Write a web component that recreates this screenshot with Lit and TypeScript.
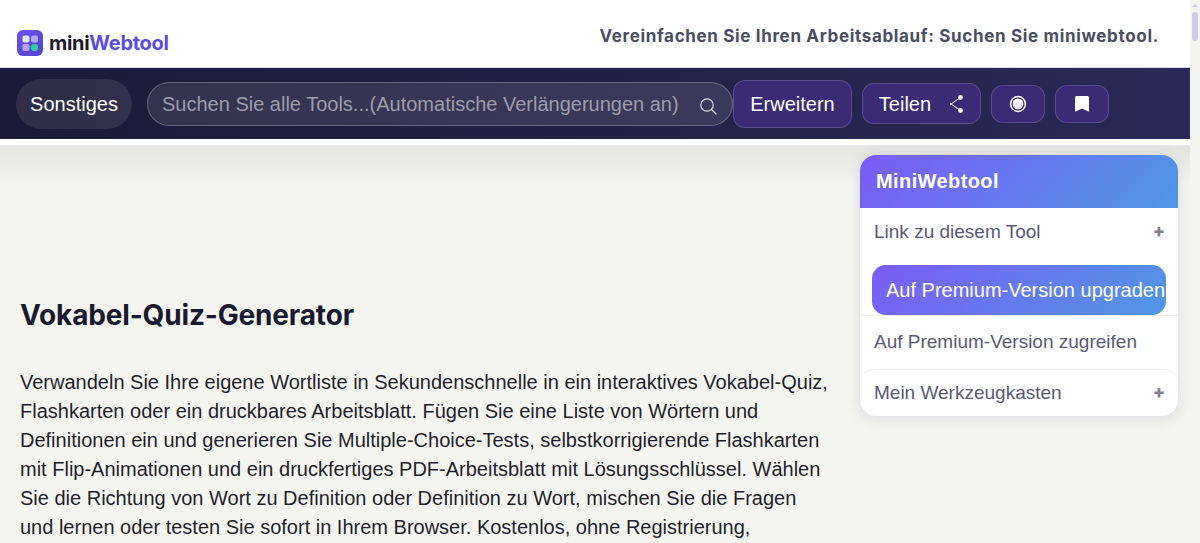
import { LitElement, html, css } from "lit";
import { customElement } from "lit/decorators.js";

@customElement("app-root")
export class AppRoot extends LitElement {
  static styles = css`
    :host { display: block; height: 543px; overflow: hidden; font-family: "Liberation Sans", Arial, sans-serif; }
    * { box-sizing: border-box; }
    .page { display: flex; height: 543px; background: #f4f5f0; }
    .main { width: 1190px; flex: none; display: flex; flex-direction: column; }
    .scrollbar { width: 10px; flex: none; background: #f4f5f0; display: flex; flex-direction: column; align-items: center; }
    .arrow { width: 0; height: 0; margin-top: 4px; border-left: 3px solid transparent; border-right: 3px solid transparent; border-bottom: 3px solid #c9c6df; }
    .thumb { width: 6px; height: 29px; margin-top: 5px; border-radius: 3px; background: #cfcde4; }
    .top { height: 67px; flex: none; background: #fff; display: flex; justify-content: space-between; padding: 0 31px 0 17px; }
    .logo { display: flex; align-items: center; gap: 6px; padding-top: 29px; height: 56px; }
    .logo svg { display: block; flex: none; }
    .logo-text { font: 700 20px/26px Inter, sans-serif; letter-spacing: -0.3px; color: #1a1a2e; margin-top: 1px; }
    .logo-text b { font-weight: 700; color: #5b4ae6; }
    .tagline { font: 700 17px/22px Inter, sans-serif; color: #4a4e60; padding-top: 25px; letter-spacing: 0.66px; white-space: nowrap; }
    .nav { height: 72px; flex: none; background: linear-gradient(90deg, #1c1a38, #2c2855); border-top: 1px solid #d9d8e8; display: flex; align-items: center; padding: 0 0 0 16px; }
    .cat { height: 50px; width: 116px; flex: none; border-radius: 25px; background: rgba(255,255,255,.09); color: #fff; font-size: 20px; display: flex; align-items: center; justify-content: center; margin-right: 15px; padding-top: 2px; }
    .search { width: 586px; height: 44px; flex: none; border-radius: 22px; background: rgba(255,255,255,.1); border: 1px solid rgba(255,255,255,.25); display: flex; align-items: center; justify-content: space-between; padding: 2px 14px 0 14px; color: #9d9cab; font-size: 20px; }
    .search svg { margin-top: 3px; }
    .btn { flex: none; background: #3a2b74; border: 1px solid rgba(255,255,255,.16); color: #fff; font-size: 20px; display: flex; align-items: center; justify-content: center; padding-top: 2px; }
    .expand { width: 119px; height: 48px; border-radius: 12px; margin-right: 10px; }
    .share { width: 119px; height: 41px; border-radius: 12px; margin-right: 10px; gap: 17px; padding-top: 1px; }
    .share svg { margin-top: -1px; }
    .icon { width: 54px; height: 38px; border-radius: 12px; margin-right: 10px; padding-top: 0; }
    .strip { height: 7px; flex: none; background: #fff; border-bottom: 1px solid #e6e5f4; }
    .content { flex: 1; min-height: 0; display: flex; justify-content: space-between; padding: 9px 12px 0 20px; background: linear-gradient(180deg, #e2e3df 0, #f4f5f0 38px); }
    .article { width: 812px; padding-top: 140px; color: #1a1a2e; }
    h1 { margin: 0 0 33px; font: 700 28px/40px Inter, sans-serif; letter-spacing: -0.16px; color: #1a1a2e; }
    p { margin: 0; font-size: 20px; line-height: 29px; color: #1f1f2b; }
    .card { width: 318px; height: 261px; flex: none; border-radius: 16px; background: #fff; box-shadow: 0 3px 14px rgba(60,55,110,.14); overflow: hidden; }
    .card-head { height: 53px; background: linear-gradient(135deg, #7c5bfa, #4f97e4); color: #fff; font-weight: 700; font-size: 20px; letter-spacing: 0.4px; display: flex; align-items: center; padding: 0 16px; }
    .row { display: flex; justify-content: space-between; align-items: center; padding: 0 14px; color: #5a5a70; font-size: 19px; }
    .row span.plus { color: #80808e; font: 800 18px/20px Inter, sans-serif; margin: -2px -1px 0 0; }
    .r1 { height: 47px; }
    .upgrade { height: 50px; margin: 10px 12px 0; border-radius: 14px; background: linear-gradient(135deg, #7c5bfa, #4f97e4); color: #fff; font-size: 20px; display: flex; align-items: center; padding-left: 14px; white-space: nowrap; overflow: hidden; }
    .r2 { height: 54px; padding-bottom: 2px; border-top: 1px solid #ecebf3; }
    .r3 { height: 47px; border-top: 1px solid #ecebf3; border-radius: 14px 14px 0 0; }
  `;

  render() {
    return html`
      <div class="page">
        <div class="main">
          <div class="top">
            <div class="logo">
              <svg width="26" height="26" viewBox="0 0 26 26">
                <defs><linearGradient id="lg" x1="0" y1="0" x2="1" y2="1"><stop offset="0" stop-color="#6d4df0"/><stop offset="1" stop-color="#4f46c8"/></linearGradient></defs>
                <rect width="26" height="26" rx="6" fill="url(#lg)"/>
                <rect x="5.5" y="5.5" width="7" height="7" rx="2" fill="#e8e4ff"/>
                <rect x="14" y="5.5" width="7" height="7" rx="2" fill="#b3a6f5"/>
                <rect x="5.5" y="14" width="7" height="7" rx="2" fill="#b3a6f5"/>
                <rect x="14" y="14" width="7" height="7" rx="3" fill="#2fd69a"/>
              </svg>
              <span class="logo-text">mini<b>Webtool</b></span>
            </div>
            <div class="tagline">Vereinfachen Sie Ihren Arbeitsablauf: Suchen Sie miniwebtool.</div>
          </div>
          <div class="nav">
            <div class="cat">Sonstiges</div>
            <div class="search">
              <span>Suchen Sie alle Tools...(Automatische Verlängerungen an)</span>
              <svg width="20" height="20" viewBox="0 0 20 20" fill="none" stroke="#dcdbe6" stroke-width="1.2"><circle cx="9" cy="9" r="6.2"/><path d="M13.5 13.5 L18 18" stroke-linecap="round"/></svg>
            </div>
            <div class="btn expand">Erweitern</div>
            <div class="btn share">Teilen
              <svg width="16" height="20" viewBox="0 0 16 20" fill="none"><path d="M12.5 3.5 L3 10 L12.5 16.5" stroke="#fff" stroke-width="1"/><circle cx="12.5" cy="3.5" r="2.4" fill="#fff"/><circle cx="12.5" cy="16.5" r="2.4" fill="#fff"/><circle cx="2.8" cy="10" r="1" fill="#fff"/></svg>
            </div>
            <div class="btn icon">
              <svg width="18" height="18" viewBox="0 0 18 18" fill="none"><circle cx="9" cy="9" r="7.4" stroke="#fff" stroke-width="1.5"/><circle cx="9" cy="9" r="5.4" fill="#e4e3ee"/><path d="M3.9 7.4 A5.4 5.4 0 0 1 14.1 7.4 Z" fill="#fff"/></svg>
            </div>
            <div class="btn icon">
              <svg width="16" height="18" viewBox="0 0 16 18"><path d="M1 2.5 Q1 1 2.5 1 H13.5 Q15 1 15 2.5 V16.8 L8 13.4 L1 16.8 Z" fill="#fff"/></svg>
            </div>
          </div>
          <div class="strip"></div>
          <div class="content">
            <div class="article">
              <h1>Vokabel-Quiz-Generator</h1>
              <p>Verwandeln Sie Ihre eigene Wortliste in Sekundenschnelle in ein interaktives Vokabel-Quiz, Flashkarten oder ein druckbares Arbeitsblatt. Fügen Sie eine Liste von Wörtern und Definitionen ein und generieren Sie Multiple-Choice-Tests, selbstkorrigierende Flashkarten mit Flip-Animationen und ein druckfertiges PDF-Arbeitsblatt mit Lösungsschlüssel. Wählen Sie die Richtung von Wort zu Definition oder Definition zu Wort, mischen Sie die Fragen und lernen oder testen Sie sofort in Ihrem Browser. Kostenlos, ohne Registrierung,</p>
            </div>
            <div class="card">
              <div class="card-head">MiniWebtool</div>
              <div class="row r1"><span>Link zu diesem Tool</span><span class="plus">+</span></div>
              <div class="upgrade">Auf Premium-Version upgraden</div>
              <div class="row r2"><span>Auf Premium-Version zugreifen</span></div>
              <div class="row r3"><span>Mein Werkzeugkasten</span><span class="plus">+</span></div>
            </div>
          </div>
        </div>
        <div class="scrollbar"><div class="arrow"></div><div class="thumb"></div></div>
      </div>
    `;
  }
}
